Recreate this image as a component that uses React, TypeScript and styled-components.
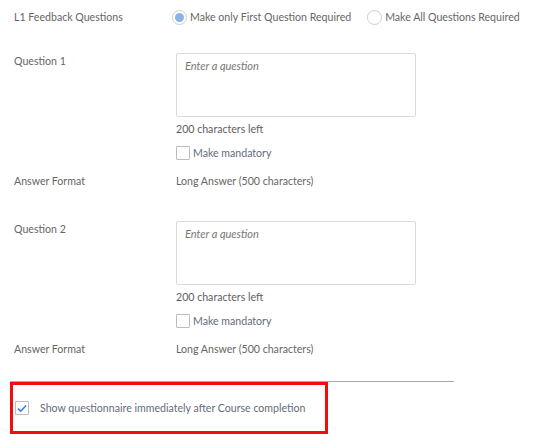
import React from 'react';
import styled, {createGlobalStyle} from 'styled-components';

const GlobalStyle = createGlobalStyle`
  body {
    margin: 0;
    background: #fff;
    font-family: Lato, "Liberation Sans", sans-serif;
    font-size: 10.6px;
    color: #5f6368;
  }
`;

const Page = styled.div`
  width: 544px;
  height: 434px;
  overflow: hidden;
  padding-top: 9px;
  box-sizing: border-box;
`;

const Row = styled.div<{top?: number}>`
  display: grid;
  grid-template-columns: 162px 1fr;
  padding-left: 14px;
  margin-top: ${p => p.top || 0}px;
`;

const Label = styled.div`
  line-height: 16px;
  white-space: nowrap;
  color: #666;
`;

const Value = styled.div`
  display: flex;
  flex-direction: column;
`;

const RadioGroup = styled.div`
  display: flex;
  align-items: center;
  margin-left: -4px;
  white-space: nowrap;
`;

const RadioOption = styled.label`
  display: flex;
  align-items: center;
  gap: 3px;
  line-height: 16px;
  margin-right: 16px;
  color: #666;
`;

const RadioCircle = styled.span<{checked?: boolean}>`
  width: 13px;
  height: 13px;
  flex: none;
  border-radius: 50%;
  border: 1px solid #cfcfcf;
  background: #fff;
  display: flex;
  align-items: center;
  justify-content: center;
  &::after {
    content: '';
    width: 9px;
    height: 9px;
    border-radius: 50%;
    background: ${p => (p.checked ? '#88b4ea' : 'transparent')};
  }
`;

const QuestionBox = styled.div`
  width: 240px;
  height: 64px;
  box-sizing: border-box;
  border: 1px solid #d9d9d9;
  border-radius: 2px;
  padding: 5px 8px;
  font-size: 11px;
  font-style: italic;
  color: #777;
  line-height: 14px;
`;

const Hint = styled.div`
  margin-top: 6px;
  line-height: 12px;
  color: #5e5e5e;
`;

const CheckRow = styled.label`
  display: flex;
  align-items: center;
  gap: 3px;
  margin-top: 10px;
  line-height: 16px;
  color: #646c78;
`;

const CheckBox = styled.span`
  width: 12px;
  height: 12px;
  flex: none;
  border: 1px solid #bdbdbd;
  border-radius: 1px;
  background: #fff;
  display: flex;
  align-items: center;
  justify-content: center;
`;

const Divider = styled.div`
  margin: 24px 0 0 10px;
  width: 444px;
  border-top: 1px solid #a8a8a8;
`;

const Highlight = styled.div`
  margin-left: 10px;
  width: 318px;
  height: 52px;
  box-sizing: border-box;
  border: 3px solid #f20d0d;
  display: flex;
  align-items: center;
  padding-left: 2px;
  gap: 11px;
  white-space: nowrap;
  color: #646c78;
`;

function Question({n, top}: {n: number; top: number}) {
  return (
    <>
      <Row top={top}>
        <Label>Question {n}</Label>
        <Value>
          <QuestionBox>Enter a question</QuestionBox>
          <Hint>200 characters left</Hint>
          <CheckRow>
            <CheckBox />
            Make mandatory
          </CheckRow>
        </Value>
      </Row>
      <Row top={12}>
        <Label>Answer Format</Label>
        <Value>
          <Label>Long Answer (500 characters)</Label>
        </Value>
      </Row>
    </>
  );
}

export default function App() {
  return (
    <Page>
      <GlobalStyle />
      <Row>
        <Label>L1 Feedback Questions</Label>
        <RadioGroup>
          <RadioOption>
            <RadioCircle checked />
            Make only First Question Required
          </RadioOption>
          <RadioOption>
            <RadioCircle />
            Make All Questions Required
          </RadioOption>
        </RadioGroup>
      </Row>
      <Question n={1} top={28} />
      <Question n={2} top={32} />
      <Divider />
      <Highlight>
        <CheckBox>
          <svg width="10" height="9" viewBox="0 0 10 9">
            <path d="M1 4.6 L3.8 7.2 L9 1.5" fill="none" stroke="#3d7fd6" strokeWidth="1.6" />
          </svg>
        </CheckBox>
        Show questionnaire immediately after Course completion
      </Highlight>
    </Page>
  );
}
